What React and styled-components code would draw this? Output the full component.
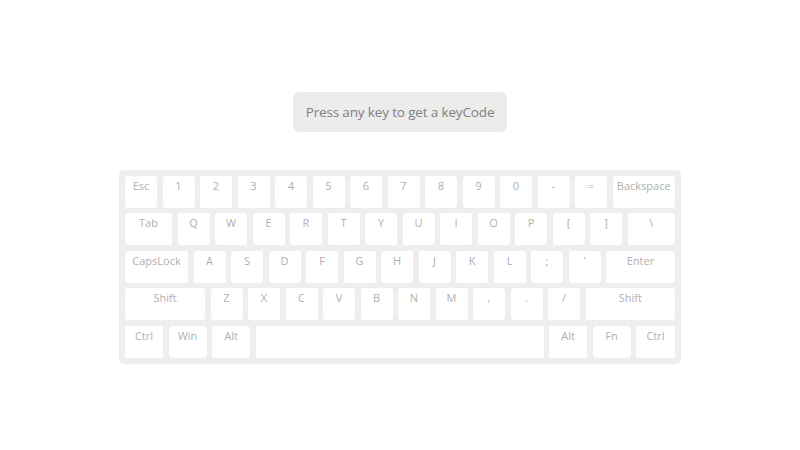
import React from "react"
import styled, { createGlobalStyle } from "styled-components"

const GlobalStyle = createGlobalStyle`
  html, body {
    margin: 0;
    padding: 0;
    background: #ffffff;
    font-family: "Open Sans", "Liberation Sans", sans-serif;
  }
`

const Page = styled.main`
  width: 800px;
  height: 450px;
  padding-top: 5px;
  box-sizing: border-box;
  display: flex;
  flex-direction: column;
  align-items: center;
  justify-content: center;
  gap: 38px;
`

const Display = styled.div`
  height: 40px;
  padding: 0 13px;
  box-sizing: border-box;
  display: flex;
  align-items: center;
  background: #ececec;
  border-radius: 6px;
  color: #808080;
  font-size: 13.5px;
  letter-spacing: -0.15px;
`

const Keyboard = styled.div`
  width: 562px;
  box-sizing: border-box;
  padding: 6px;
  background: #eeeeee;
  border-radius: 5px;
  display: flex;
  flex-direction: column;
  gap: 5.5px;
`

const Row = styled.div`
  display: flex;
  gap: 5.5px;
`

const Key = styled.div`
  width: ${p => p.$w || 32}px;
  flex: ${p => (p.$grow ? 1 : "none")};
  height: 32px;
  box-sizing: border-box;
  padding-top: 3px;
  background: #ffffff;
  border-radius: 3px;
  color: #b0b0b0;
  font-size: 11px;
  line-height: 13px;
  text-align: center;
`

const rows = [
  [["Esc"], ["1"], ["2"], ["3"], ["4"], ["5"], ["6"], ["7"], ["8"], ["9"], ["0"], ["-"], ["="], ["Backspace", 0, true]],
  [["Tab", 47], ["Q"], ["W"], ["E"], ["R"], ["T"], ["Y"], ["U"], ["I"], ["O"], ["P"], ["["], ["]"], ["\\", 0, true]],
  [["CapsLock", 63], ["A"], ["S"], ["D"], ["F"], ["G"], ["H"], ["J"], ["K"], ["L"], [";"], ["'"], ["Enter", 0, true]],
  [["Shift", 80], ["Z"], ["X"], ["C"], ["V"], ["B"], ["N"], ["M"], [","], ["."], ["/"], ["Shift", 0, true]],
  [["Ctrl", 38], ["Win", 38], ["Alt", 38], ["", 288], ["Alt", 38], ["Fn", 38], ["Ctrl", 0, true]],
]

export default function App() {
  return (
    <>
      <GlobalStyle />
      <Page>
        <Display>Press any key to get a keyCode</Display>
        <Keyboard>
          {rows.map((row, i) => (
            <Row key={i}>
              {row.map(([label, w, grow], j) => (
                <Key key={j} $w={w || 32} $grow={grow}>
                  {label}
                </Key>
              ))}
            </Row>
          ))}
        </Keyboard>
      </Page>
    </>
  )
}
